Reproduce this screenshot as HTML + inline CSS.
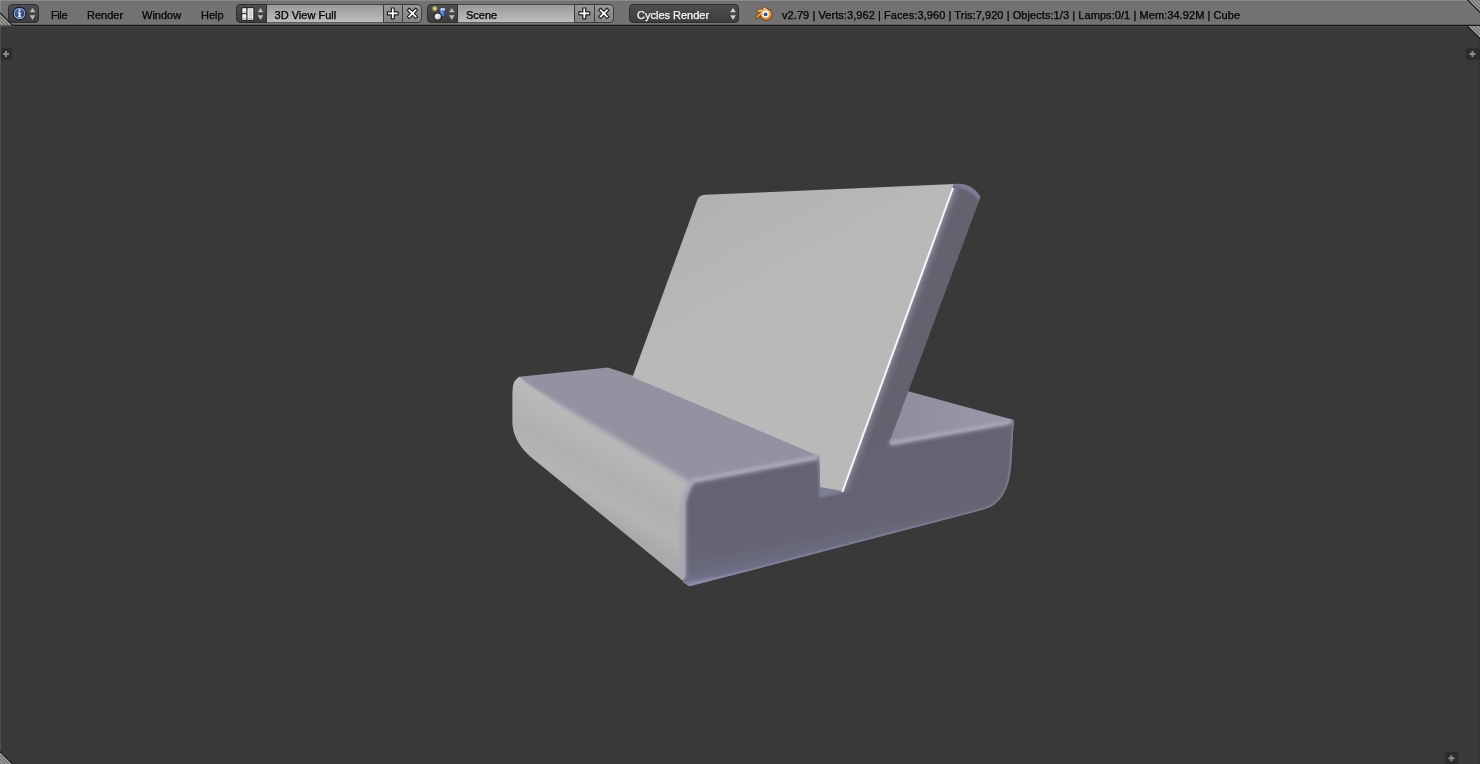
<!DOCTYPE html>
<html>
<head>
<meta charset="utf-8">
<title>Blender</title>
<style>
html,body{margin:0;padding:0;}
body{width:1480px;height:764px;overflow:hidden;background:#393939;font-family:"Liberation Sans",sans-serif;font-size:11px;position:relative;}
#hdr{position:absolute;left:0;top:0;width:1480px;height:25px;background:linear-gradient(#727272 0,#727272 22px,#767676 24px,#5a5a5a 24px,#5a5a5a 25px);border-bottom:1px solid #161616;}
#hdr:after{content:"";position:absolute;left:0;top:26px;width:1480px;height:1px;background:#474747;}
#ledge{position:absolute;left:0;top:0;width:1px;height:764px;background:linear-gradient(#8c8c8c 0,#8c8c8c 25px,#4e4e4e 26px,#4e4e4e 100%);}
#redge{position:absolute;left:1479px;top:27px;width:1px;height:737px;background:#343434;}
#hdr .topline{position:absolute;left:0;top:0;width:1480px;height:1px;background:#8a8a8a;}
.t{position:absolute;top:7.5px;-webkit-text-stroke:0.25px #0c0c0c;text-shadow:0 0 0.6px rgba(0,0,0,0.45);height:14px;line-height:14px;color:#0c0c0c;white-space:nowrap;transform-origin:0 50%;}
.w{color:#f0f0f0;-webkit-text-stroke:0.25px #f0f0f0;text-shadow:0 0 0.6px rgba(255,255,255,0.4);}
#txt{position:absolute;left:0;top:0;width:1480px;height:26px;will-change:transform;opacity:0.999;}
.dk{position:absolute;top:4px;height:19px;background:linear-gradient(#4e4e4e,#3d3d3d);border:1px solid #2e2e2e;box-sizing:border-box;}
.fld{position:absolute;top:4px;height:19px;background:linear-gradient(#9a9a9a,#bdbdbd);border-top:1px solid #4a4a4a;border-bottom:1px solid #5a5a5a;box-sizing:border-box;}
.btn{position:absolute;top:4px;height:19px;background:linear-gradient(#969696,#858585);border:1px solid #3c3c3c;box-sizing:border-box;}
#view{position:absolute;left:0;top:26px;width:1480px;height:738px;background:#393939;}
.cw{position:absolute;width:13px;height:12px;background:#2c2c2c;border-radius:3px;box-shadow:0 0 1px #2c2c2c;}
svg{position:absolute;left:0;top:0;}
</style>
</head>
<body>
<div id="view"></div>
<svg id="model" width="1480" height="764" viewBox="0 0 1480 764">
<defs>
<linearGradient id="gSide" gradientUnits="userSpaceOnUse" x1="601.5" y1="423.5" x2="560.5" y2="493">
<stop offset="0" stop-color="#bababb"/><stop offset="0.2" stop-color="#b7b7b8"/><stop offset="0.5" stop-color="#b0b0b1"/><stop offset="0.8" stop-color="#b4b4b4"/><stop offset="1" stop-color="#aaaaac"/>
</linearGradient>
<linearGradient id="gWedge" gradientUnits="userSpaceOnUse" x1="601.5" y1="424" x2="596.4" y2="432.6">
<stop offset="0" stop-color="#9292a1" stop-opacity="1"/><stop offset="0.25" stop-color="#9696a4" stop-opacity="0.95"/><stop offset="1" stop-color="#aeaeb4" stop-opacity="0"/>
</linearGradient>
<linearGradient id="gFront" gradientUnits="userSpaceOnUse" x1="800" y1="440" x2="822" y2="560">
<stop offset="0" stop-color="#636370"/><stop offset="0.8" stop-color="#656573"/><stop offset="0.96" stop-color="#6e6e86"/><stop offset="1" stop-color="#8a8aa6"/>
</linearGradient>
<linearGradient id="gPlate" gradientUnits="userSpaceOnUse" x1="700" y1="190" x2="760" y2="300">
<stop offset="0" stop-color="#b1b1b1"/><stop offset="1" stop-color="#b9b9b9"/>
</linearGradient>
<linearGradient id="gTopR" gradientUnits="userSpaceOnUse" x1="900" y1="420" x2="1013" y2="420">
<stop offset="0" stop-color="#8e8e9e"/><stop offset="1" stop-color="#9a9aaa"/>
</linearGradient>
<linearGradient id="gRight" gradientUnits="userSpaceOnUse" x1="1000" y1="460" x2="1013" y2="461">
<stop offset="0" stop-color="#7a7a90" stop-opacity="0"/><stop offset="1" stop-color="#8a8aa2" stop-opacity="0.9"/>
</linearGradient>
<filter id="b1" x="-5%" y="-5%" width="110%" height="110%"><feGaussianBlur stdDeviation="0.45"/></filter>
<filter id="b2" x="-20%" y="-20%" width="140%" height="140%"><feGaussianBlur stdDeviation="1.2"/></filter>
<filter id="b3" x="-20%" y="-20%" width="140%" height="140%"><feGaussianBlur stdDeviation="2"/></filter>
<clipPath id="cFront"><path d="M692.5,479.7 L819,456 L820.5,496 L842,491.5 L954,184 Q972,182.5 980.5,197 L889.5,442 L1013.8,420 L1011.5,462 Q1009.5,502 984,509.6 L689.5,586.3 L683.2,582.5 L683.2,502 Q685.5,489 692.5,479.7 Z"/></clipPath>
</defs>
<g filter="url(#b1)">
<!-- base top right -->
<polygon points="900,389 1013.8,420 1013.8,425 885,448" fill="url(#gTopR)"/>
<!-- base top left -->
<polygon points="517,377 608,367.5 640,378 822,455 822,460 692,485 600,430" fill="#9292a1"/>
<!-- left side face -->
<path d="M512.4,392 Q512.4,379 520,377 L700,479 L690,500 L687,585 L689.5,586.3 L532,458 Q514,443 512.4,424 Z" fill="url(#gSide)"/>
<!-- bevel wedge -->
<polygon points="527,377.5 704,474 704,478 692,498 521,379" fill="url(#gWedge)" filter="url(#b2)"/>
<!-- plate front -->
<path d="M705,194.8 L954,184 L843,493 L820,497 L819,456 L632.5,377 L697.3,200 Q699,195 705,194.8 Z" fill="url(#gPlate)"/>
<!-- slot floor -->
<polygon points="820,487 842,491 843,493 820,497" fill="#7e7e92"/>
<!-- front face + plate side -->
<path d="M692.5,479.7 L819,456 L820.5,496 L842,491.5 L954,184 Q972,182.5 980.5,197 L889.5,442 L1013.8,420 L1011.5,462 Q1009.5,502 984,509.6 L689.5,586.3 L683.2,582.5 L683.2,502 Q685.5,489 692.5,479.7 Z" fill="url(#gFront)"/>
<!-- unclipped bevels (spill onto similar coloured faces) -->
<path d="M683.5,577 L683.5,503 Q686,490 693,481 L819,457.3" fill="none" stroke="#a0a0ae" stroke-width="5" filter="url(#b3)" opacity="0.9"/>
<path d="M683.6,579 L683.6,503 Q686,490 693,480.7 L819,457" fill="none" stroke="#acacba" stroke-width="3" filter="url(#b2)"/>
<path d="M890,443.6 L1010,422.4" fill="none" stroke="#a0a0b2" stroke-width="4.5" filter="url(#b3)" opacity="0.9"/>
<path d="M890,443.3 L1011.5,421.8" fill="none" stroke="#acacbe" stroke-width="3" filter="url(#b2)"/>
<g clip-path="url(#cFront)">
<!-- slot inner shading -->
<path d="M819,456 L820.5,496 L842,491.5" fill="none" stroke="#8686a0" stroke-width="2.5" filter="url(#b2)"/>
<!-- bottom rim -->
<path d="M689.5,586.3 L984,509.6 Q1009.5,502 1011.5,462 L1013.8,420" fill="none" stroke="#9090ac" stroke-width="2.4" filter="url(#b2)" opacity="0.85"/>
<!-- plate side: lighter band next to highlight -->
<line x1="957" y1="187" x2="846" y2="492" stroke="#7c7c8c" stroke-width="5" filter="url(#b3)" opacity="0.7"/>
<!-- plate side top rounded -->
<path d="M954,182.5 Q974,181 982,198 L980,202 Q970,188 953,186 Z" fill="#8080a0" filter="url(#b2)" opacity="0.85"/>
</g>
<!-- highlight -->
<line x1="954.6" y1="188" x2="843.4" y2="492" stroke="#a8a8b4" stroke-width="2.2" opacity="0.6" filter="url(#b2)"/>
<line x1="953" y1="188" x2="842.3" y2="492" stroke="#f8f8fc" stroke-width="2"/>
</g>
</svg>

<div id="hdr"><div class="topline"></div><div class="dk" style="left:8px;width:31px;border-radius:4px;"></div>

<div class="dk" style="left:236px;width:31px;border-radius:4px 0 0 4px;"></div>
<div class="fld" style="left:267px;width:116px;"></div>
<div class="btn" style="left:383px;width:20px;"></div>
<div class="btn" style="left:402px;width:20px;border-radius:0 4px 4px 0;"></div>

<div class="dk" style="left:427px;width:31px;border-radius:4px 0 0 4px;"></div>
<div class="fld" style="left:458px;width:116px;"></div>
<div class="btn" style="left:574px;width:21px;"></div>
<div class="btn" style="left:594px;width:20px;border-radius:0 4px 4px 0;"></div>

<div class="dk" style="left:629px;width:110px;border-radius:4px;"></div>

<div id="txt">
<div class="t" style="left:51px;letter-spacing:-0.4px;">File</div>
<div class="t" style="left:87px;">Render</div>
<div class="t" style="left:142px;">Window</div>
<div class="t" style="left:201px;">Help</div>
<div class="t" style="left:274.6px;">3D View Full</div>
<div class="t" style="left:466px;">Scene</div>
<div class="t w" style="left:637px;">Cycles Render</div>
<div class="t" id="status" style="left:782px;letter-spacing:0.07px;">v2.79 | Verts:3,962 | Faces:3,960 | Tris:7,920 | Objects:1/3 | Lamps:0/1 | Mem:34.92M | Cube</div>
</div>
</div>

<div id="ledge"></div><div id="redge"></div>
<div class="cw" style="left:1px;top:48px;width:11px;"></div>
<div class="cw" style="left:1466px;top:48px;width:14px;"></div>
<div class="cw" style="left:1445px;top:752px;height:13px;border-radius:3px 3px 0 0;"></div>

<svg id="icons" width="1480" height="764" viewBox="0 0 1480 764">
<defs>
<radialGradient id="gInfo" cx="0.4" cy="0.3" r="0.8"><stop offset="0" stop-color="#4c68b0"/><stop offset="1" stop-color="#22387c"/></radialGradient>
<radialGradient id="gSph" cx="0.35" cy="0.3" r="0.8"><stop offset="0" stop-color="#ffffff"/><stop offset="0.6" stop-color="#d8d8d8"/><stop offset="1" stop-color="#909090"/></radialGradient>
<radialGradient id="gLamp" cx="0.5" cy="0.5" r="0.5"><stop offset="0" stop-color="#f0eca0"/><stop offset="0.5" stop-color="#c8c258" stop-opacity="0.85"/><stop offset="1" stop-color="#a0a040" stop-opacity="0"/></radialGradient>
<linearGradient id="gCyl" x1="0" y1="0" x2="1" y2="0"><stop offset="0" stop-color="#9ab8f0"/><stop offset="0.5" stop-color="#4a78d8"/><stop offset="1" stop-color="#2a50a8"/></linearGradient>
<linearGradient id="gLogo" gradientUnits="userSpaceOnUse" x1="0" y1="-6" x2="0" y2="6"><stop offset="0" stop-color="#f6cc6c"/><stop offset="0.5" stop-color="#ec9c34"/><stop offset="1" stop-color="#d8701c"/></linearGradient>
<filter id="ib" x="-20%" y="-20%" width="140%" height="140%"><feGaussianBlur stdDeviation="0.35"/></filter>
<g id="arrows"><polygon points="0,-5.7 -2.8,-1.3 2.8,-1.3"/><polygon points="-2.8,1.7 2.8,1.7 0,6.3"/></g>
<g id="plus"><path d="M-1.45,-5.4h2.9v3.95h3.95v2.9h-3.95v3.95h-2.9v-3.95h-3.95v-2.9h3.95z" fill="#fff" stroke="#222" stroke-width="1.2" stroke-linejoin="round"/></g>
<g id="cross"><path d="M-1.4,-5.9h2.8v4.5h4.5v2.8h-4.5v4.5h-2.8v-4.5h-4.5v-2.8h4.5z" transform="rotate(45)" fill="#fff" stroke="#222" stroke-width="1.2" stroke-linejoin="round"/></g>
<g id="cplus"><path d="M-1,-3h2v2h2v2h-2v2h-2v-2h-2v-2h2z" fill="#8a8a8a"/></g>
<g id="stripes"><polygon points="0,0 12.5,12.5 0,12.5" fill="#9a9a9a"/><g fill="none"><path d="M0,3.9 L8.6,12.5" stroke="#484848" stroke-width="0.8"/><path d="M0,7.5 L5,12.5" stroke="#484848" stroke-width="0.8"/><path d="M0,11.1 L1.4,12.5" stroke="#484848" stroke-width="0.8"/><path d="M-0.5,-0.5 L13,13" stroke="#1a1a1a" stroke-width="1.2"/></g></g>
</defs>
<g filter="url(#ib)">
<!-- info icon -->
<circle cx="19.5" cy="13.4" r="6.9" fill="#141c38"/>
<circle cx="19.5" cy="13.4" r="5.7" fill="#b4c0e0"/>
<circle cx="19.5" cy="13.4" r="4.9" fill="url(#gInfo)"/>
<path d="M18.6,9.6h1.9v1.7h-1.9z M18.0,12.2h2.5v4.0h0.9v1.0h-3.6v-1.0h0.9v-3.0h-0.7z" fill="#fff"/>
<use href="#arrows" x="32.5" y="13.6" fill="#bababa"/>
<!-- screen icon -->
<g transform="translate(241.3,7.2)">
<rect x="0" y="0" width="13" height="13.6" rx="1.4" fill="#222"/>
<rect x="1" y="1" width="4" height="5" fill="#f4f4f4"/>
<rect x="1" y="7" width="4" height="5.6" fill="#f4f4f4"/>
<rect x="6.2" y="1" width="5.8" height="11.6" fill="#f4f4f4"/>
<rect x="7.2" y="2" width="3.8" height="8" fill="#d0d0d0"/>
<rect x="1.8" y="4.3" width="2.4" height="1" fill="#999"/>
<rect x="1.8" y="10.6" width="2.4" height="1" fill="#999"/>
<rect x="7.2" y="10.6" width="3.8" height="1" fill="#999"/>
</g>
<use href="#arrows" x="260.5" y="13.6" fill="#bababa"/>
<!-- plus / cross 1 -->
<use href="#plus" x="392.8" y="13.4"/>
<use href="#cross" x="412.4" y="13.4"/>
<!-- scene icon -->
<circle cx="434.8" cy="8.6" r="3.4" fill="url(#gLamp)"/>
<path d="M440.2,9.2 a2.6,1.3 0 0 1 5.2,0 v6 a2.6,1.3 0 0 1 -5.2,0 z" fill="url(#gCyl)" stroke="#1c2c58" stroke-width="0.5"/>
<ellipse cx="442.8" cy="9.2" rx="2.6" ry="1.3" fill="#b8d0f8"/>
<circle cx="437.8" cy="16.6" r="4.1" fill="#141414"/>
<circle cx="437.8" cy="16.6" r="3.2" fill="url(#gSph)"/>
<use href="#arrows" x="451.8" y="13.6" fill="#bababa"/>
<!-- plus / cross 2 -->
<use href="#plus" x="584.3" y="13.4"/>
<use href="#cross" x="603.8" y="13.4"/>
<use href="#arrows" x="733" y="13.6" fill="#d0d0d0"/>
</g>
<!-- blender logo -->
<g id="blogo" transform="translate(766,14.5)" filter="url(#ib)">
<g stroke="#5a3206" stroke-width="3.3" stroke-linecap="round" fill="#5a3206">
<circle cx="0.2" cy="0.2" r="4.6"/>
<line x1="-7.4" y1="-3.6" x2="-1" y2="-4.2"/>
<line x1="-9" y1="2.4" x2="-3.6" y2="-2.2"/>
<line x1="-1.7" y1="-6.3" x2="1.2" y2="-3.8"/>
</g>
<g stroke="url(#gLogo)" stroke-width="2.1" stroke-linecap="round" fill="url(#gLogo)">
<circle cx="0.2" cy="0.2" r="4.4"/>
<line x1="-7.4" y1="-3.6" x2="-1" y2="-4.2"/>
<line x1="-9" y1="2.4" x2="-3.6" y2="-2.2"/>
<line x1="-1.7" y1="-6.3" x2="1.2" y2="-3.8" stroke="#f4c8a0"/>
</g>
<circle cx="-0.45" cy="-0.1" r="3.3" fill="#fff"/>
<circle cx="-0.45" cy="-0.1" r="1.9" fill="#2454a4"/>
</g>
<!-- corner stripes -->
<g transform="translate(0,12.9)"><use href="#stripes"/></g>
<g transform="translate(1480,12.3) rotate(180)"><use href="#stripes"/></g>
<g transform="translate(1480,38.6) rotate(180)"><use href="#stripes"/></g>
<g transform="translate(0,751.5)"><use href="#stripes"/></g>
<use href="#cplus" x="6" y="54"/>
<use href="#cplus" x="1472.5" y="54"/>
<use href="#cplus" x="1451.4" y="758.2"/>
</svg>
</body>
</html>
